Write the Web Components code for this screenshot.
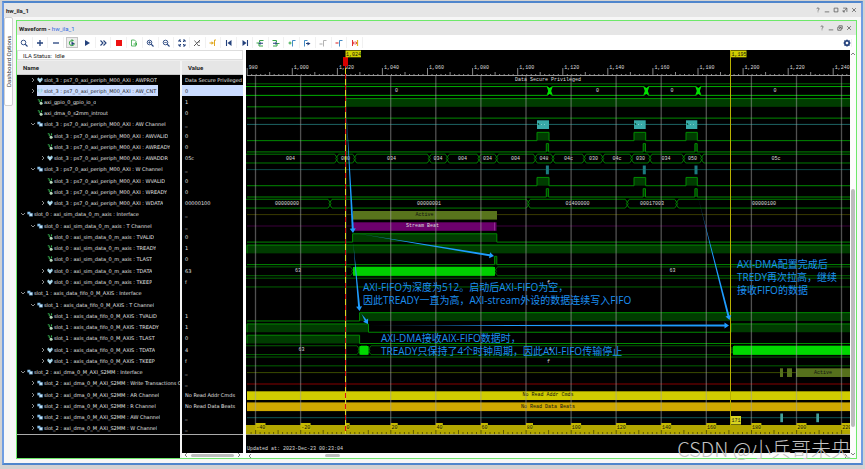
<!DOCTYPE html>
<html lang="en">
<head>
<meta charset="utf-8">
<title>hw_ila_1</title>
<style>
html,body{height:100%;margin:0}
body{background:#d2d2d2;font-family:Roboto,"Liberation Sans",sans-serif;font-size:6px;color:#222;overflow:hidden}
</style>
</head>
<body>
<ila-dashboard></ila-dashboard>
<script>
const define=(name,html,setup)=>customElements.define(name,class extends HTMLElement{
  constructor(){super();const t=document.createElement('template');t.innerHTML=html;
    this.attachShadow({mode:'open'}).append(t.content.cloneNode(true));}
  connectedCallback(){if(setup&&!this.ready){this.ready=true;setup(this,this.shadowRoot);}}
});

/* ---------- window buttons ---------- */
const winIcons={
  help:['Help','<path d="M5 5.5C5 1.5 11 1.5 11 5.2C11 7.5 8 7.5 8 10M8 12v2"/>'],
  min:['Minimize','<path d="M2 13h12"/>'],
  max:['Maximize','<path d="M3 3h10v10H3z"/>'],
  float:['Float','<path d="M3 3h10v10M13 3L4 13M3 8v5h5"/>'],
  restore:['Restore','<path d="M5 5V2h9v8h-3M2 6h9v8H2zM5 11l6-6"/>'],
  close:['Close','<path d="M3 3l10 10M13 3L3 13"/>']};
define('window-buttons',`<style>
:host{display:flex;gap:3px}
button{all:unset;width:6px;height:6px;display:block}
svg{display:block;width:6px;height:6px;fill:none;stroke:#555;stroke-width:2}
</style>`,(el,root)=>{
  for(const k of el.getAttribute('items').split(' ')){
    const b=document.createElement('button');b.setAttribute('aria-label',winIcons[k][0]);
    b.innerHTML=`<svg viewBox="0 0 16 16">${winIcons[k][1]}</svg>`;root.append(b);}
});

define('title-bar',`<style>
:host{display:flex;align-items:center;justify-content:space-between;background:#e6e6e6;height:14px;padding:0 4px 0 2px;box-sizing:border-box;font-weight:700;color:#222}
</style><span><slot></slot></span><slot name="tools"></slot>`);

/* ---------- toolbar ---------- */
const N='#24427c',G='#35a845',B='#2f7fc0';
const mag=s=>`<circle cx="7" cy="7" r="4.6" fill="none" stroke="${N}" stroke-width="1.8"/><path d="M10.5 10.5L15 15" stroke="${N}" stroke-width="2.2"/>${s}`;
const edge=(c,d)=>`<path d="M9 15V3h6" fill="none" stroke="${c}" stroke-width="1.8"/>${d}`;
const tools=[
 ['Search',mag('')],
 ['Add','<path d="M8 2v12M2 8h12" stroke="'+N+'" stroke-width="2.6"/>'],
 ['Remove','<path d="M2 8h12" stroke="'+N+'" stroke-width="2.6"/>'],
 ['Auto re-trigger',`<path d="M7 3A5.2 5.2 0 1 0 13 9" fill="none" stroke="${G}" stroke-width="2"/><path d="M7 0l5 3-5 3z" fill="${G}"/><path d="M7 5l6 4-6 4z" fill="${N}"/>`],
 ['Run trigger',`<path d="M4 2l10 6-10 6z" fill="${N}"/>`],
 ['Run immediate',`<path d="M3 3l5 5-5 5M9 3l5 5-5 5" fill="none" stroke="${N}" stroke-width="2.2"/>`],
 ['Stop','<path d="M2 2h12v12H2z" fill="#ee1111"/>'],
 ['Export data',`<path d="M3 2h6l3 3v9H3z" fill="none" stroke="${G}" stroke-width="1.6"/><path d="M7 10h7M11 7l3 3-3 3" fill="none" stroke="${G}" stroke-width="1.8"/>`],
 ['Zoom in',mag(`<path d="M7 4.5v5M4.5 7h5" stroke="${N}" stroke-width="1.5"/>`)],
 ['Zoom out',mag(`<path d="M4.5 7h5" stroke="${N}" stroke-width="1.5"/>`)],
 ['Zoom fit',`<path d="M2 6V2h4M10 2h4v4M14 10v4h-4M6 14H2v-4M2 2l4 4M14 2l-4 4M14 14l-4-4M2 14l4-4" fill="none" stroke="${N}" stroke-width="2"/>`],
 ['Snap off',`<path d="M2 14L14 2" stroke="#444" stroke-width="1.8"/><path d="M3 3l4 5M8 9l2 4h4M10 6h4" fill="none" stroke="#555" stroke-width="1.6"/>`],
 ['Go to cursor',`<path d="M14 2h-3v12" fill="none" stroke="#e0a820" stroke-width="2"/><path d="M1 8h5" stroke="#e0a820" stroke-width="2"/><path d="M5 4.500l5 3.500-5 3.500z" fill="#e0a820"/>`],
 ['First',`<path d="M3 2v12" stroke="${N}" stroke-width="2.2"/><path d="M13 2v12L5 8z" fill="${N}"/>`],
 ['Last',`<path d="M13 2v12" stroke="${N}" stroke-width="2.2"/><path d="M3 2v12l8-6z" fill="${N}"/>`],
 ['Previous transition',`<path d="M15 3H7v3M1 8h5v6h8" fill="none" stroke="${G}" stroke-width="2"/><path d="M14 8.500H8" stroke="${N}" stroke-width="2"/><path d="M9 5v7L5 8.500z" fill="${N}"/>`],
 ['Next transition',`<path d="M1 3h8v3M2 14h8V9h5" fill="none" stroke="${G}" stroke-width="2"/><path d="M2 8.500h6" stroke="${N}" stroke-width="2"/><path d="M7 5v7l4-3.500z" fill="${N}"/>`],
 ['Add marker',edge(B,`<path d="M4 5v6M1 8h6" stroke="${G}" stroke-width="2"/>`)],
 ['Next marker',`<path d="M3 15V3h6" fill="none" stroke="${B}" stroke-width="1.8"/><path d="M6 9h4" stroke="${N}" stroke-width="2"/><path d="M9 6l6 3-6 4z" fill="${N}"/>`],
 ['Previous marker',edge('#aaa','<path d="M1 10h6" stroke="#aaa" stroke-width="2"/>')],
 ['Remove marker',edge(B,'<path d="M1 8h6" stroke="#e03030" stroke-width="2.200"/>')],
 ['Swap cursors','<path d="M3 2v12" stroke="#e03030" stroke-width="2"/><path d="M13 2v12" stroke="#e0b020" stroke-width="2.500"/><path d="M3 8h9M6 5L4 8l2 3M9 5l3 3-3 3" stroke="#e03030" stroke-width="1.500" fill="none"/>']];
define('wave-toolbar',`<style>
:host{display:flex;justify-content:space-between;align-items:center;height:15px;background:#fff;padding-right:4px}
.set{display:grid;grid-template-columns:repeat(22,1fr);width:346px;height:11px}
button{all:unset;box-sizing:border-box;display:flex;align-items:center;justify-content:center;border-right:1px solid #f1f1f1}
button[aria-pressed]{border:1px solid #c4c4c4;background:#ececec;margin:0 2px}
svg{width:8px;height:8px;display:block}
</style><div class="set" role="toolbar"></div>
<button class="cfg" aria-label="Settings"><svg viewBox="0 0 16 16"><circle cx="8" cy="8" r="4.500" fill="none" stroke="#24427c" stroke-width="3.500"/><path d="M8 1v14M1 8h14M3 3l10 10M13 3L3 13" stroke="#24427c" stroke-width="2"/><circle cx="8" cy="8" r="2.500" fill="#fff"/></svg></button>`,(el,root)=>{
  root.querySelector('.set').innerHTML=tools.map(([n,s],i)=>`<button aria-label="${n}"${i===3?' aria-pressed="true"':''}><svg viewBox="0 0 16 16">${s}</svg></button>`).join('');
});

/* ---------- scroll bar ---------- */
define('scroll-strip',`<style>
:host{display:flex;background:#fcfcfc;align-items:center;justify-content:space-between;box-sizing:border-box;padding:0 2px;gap:3px;height:5px}
:host([vertical]){flex-direction:column;height:auto;padding:2px 0}
svg{width:4px;height:4px;fill:none;stroke:#555;stroke-width:1.5;flex:none}
.track{flex:1;display:flex;align-self:stretch;align-items:center}
:host([vertical]) .track{flex-direction:column;align-self:center}
.lead{flex:var(--lead,0)}.thumb{flex:var(--size,1);background:#bdbdbd;border-radius:2px;height:3px}.tail{flex:var(--tail,0)}
:host([vertical]) .thumb{width:4px;height:auto}
:host([vertical]) svg{transform:rotate(90deg)}
</style><svg viewBox="0 0 8 8"><path d="M6 0L2 4l4 4"/></svg><div class="track"><i class="lead"></i><i class="thumb"></i><i class="tail"></i></div><svg viewBox="0 0 8 8"><path d="M2 0l4 4-4 4"/></svg>`);

/* ---------- signal names and values ---------- */
const s3='slot_3 : ps7_0_axi_periph_M00_AXI : ',s0='slot_0 : axi_sim_data_0_m_axis : ',s1='slot_1 : axis_data_fifo_0_M_AXIS : ',s2='slot_2 : axi_dma_0_M_AXI_S2MM : ';
/* [level, kind, expander, name, value] */
const rows=[
[1,'bus','>',s3+'AWPROT','Data Secure Privileged'],[1,'bus','>',s3+'AW_CNT','0'],
[1,'bit','','axi_gpio_0_gpio_io_o','1'],[1,'bit','','axi_dma_0_s2mm_introut','0'],
[1,'if','v',s3+'AW Channel','_'],[2,'bit','',s3+'AWVALID','0'],[2,'bit','',s3+'AWREADY','0'],[2,'bus','>',s3+'AWADDR','05c'],
[1,'if','v',s3+'W Channel','_'],[2,'bit','',s3+'WVALID','0'],[2,'bit','',s3+'WREADY','0'],[2,'bus','>',s3+'WDATA','00000100'],
[0,'if','v',s0+'Interface','_'],[1,'if','v',s0+'T Channel','_'],[2,'bit','',s0+'TVALID','0'],[2,'bit','',s0+'TREADY','1'],[2,'bit','',s0+'TLAST','0'],[2,'bus','>',s0+'TDATA','63'],[2,'bus','>',s0+'TKEEP','f'],
[0,'if','v',s1+'Interface',''],[1,'if','v',s1+'T Channel',''],[2,'bit','',s1+'TVALID','1'],[2,'bit','',s1+'TREADY','1'],[2,'bit','',s1+'TLAST','0'],[2,'bus','>',s1+'TDATA','4'],[2,'bus','>',s1+'TKEEP','f'],
[0,'if','v',s2+'Interface','_'],[1,'if','>',s2+'Write Transactions Channel','_'],[1,'if','>',s2+'AR Channel','No Read Addr Cmds'],[1,'if','>',s2+'R Channel','No Read Data Beats'],[1,'if','>',s2+'AW Channel','_'],[1,'if','>',s2+'W Channel','_']];
const kinds={
 bus:'<path d="M1 4l3-3 4 4 4-4 3 3v4l-7 7-7-7z" fill="#9fd0e4"/><path d="M8 5v9" stroke="#e8f6ff" stroke-width="2"/>',
 bit:'<path d="M2 2h4v6h4v6" fill="none" stroke="#35b050" stroke-width="2.500"/><circle cx="11" cy="11" r="4" fill="#bcd8bc"/><path d="M12 1v5" stroke="#35b050" stroke-width="3"/>',
 if:'<path d="M1 2h8v7H1z" fill="#8cc4ee"/><path d="M6 6h9v8H6z" fill="#c8e6fa" stroke="#3a80b8" stroke-width="1"/>'};
define('signal-table',`<style>
:host{display:grid;min-height:0}
table{display:grid;grid-template-columns:163px 61px;grid-template-rows:14px 10px repeat(31,1fr) 24px;column-gap:2px;background:#f4f4f4;min-height:0}
thead,tbody,tr{display:contents}
th{background:#e6e6e6;text-align:left;color:#222;padding:0 6px;display:flex;align-items:center;border-bottom:1px solid #c8c8c8;box-sizing:border-box}
td{background:#000;color:#e2e2e2;font:5px/8px "DejaVu Sans",sans-serif;padding:0;display:flex;align-items:center;white-space:nowrap;overflow:hidden;min-width:0;min-height:0}
td.n{padding-left:calc(2px + 10px*var(--l));gap:1px}
td.v{padding-left:3px}
button{all:unset;width:7px;height:8px;flex:none;display:flex;align-items:center;justify-content:center}
button svg{width:4px;height:4px;fill:none;stroke:#bbb;stroke-width:1.5}
.lab{display:flex;align-items:center;gap:1px;height:100%;min-width:0;overflow:hidden}
.lab svg{width:6px;height:6px;flex:none}
.sel .lab,.sel .v{background:#cbdcff;color:#222}
.sel .lab{padding-right:2px}
.end{border-top:1px solid #aaa;box-sizing:border-box;align-items:flex-end}
scroll-strip{flex:1}
</style><table><thead><tr><th scope="col">Name</th><th scope="col">Value</th></tr></thead><tbody></tbody></table>`,(el,root)=>{
  root.querySelector('tbody').innerHTML=rows.map(([l,k,x,n,v],i)=>`<tr${i===1?' class="sel"':''}><td class="n" style="--l:${l}">${x?`<button aria-label="${x==='v'?'Collapse':'Expand'}" aria-expanded="${x==='v'}"><svg viewBox="0 0 8 8"><path d="${x==='v'?'M0 2l4 4 4-4':'M2 0l4 4-4 4'}"/></svg></button>`:'<button tabindex="-1" aria-hidden="true"></button>'}<span class="lab"><svg viewBox="0 0 16 16">${kinds[k]}</svg>${n}</span></td><td class="v">${v}</td></tr>`).join('')
  +'<tr><td class="end"></td><td class="end"><scroll-strip></scroll-strip></td></tr>';
});

/* ---------- waveform drawing ---------- */
define('wave-canvas',`<style>
:host{display:block;background:#000;min-height:0;overflow:hidden}
svg{display:block;width:100%;height:100%}
text{font:5px "Liberation Mono",monospace;fill:#ddd}
text.m{text-anchor:middle}
text.k{fill:#111}
text.note{font:10px "Open Sans","Noto Sans CJK SC",sans-serif;fill:#1c8ff0}
</style><svg viewBox="246 50 604 403" preserveAspectRatio="xMinYMin meet"></svg>`,(el,root)=>{
  const L=247,R=850,c=i=>79.3+11.27*i;let o='';
  const rect=(x,y,w,h,f,s)=>o+=`<rect x="${x}" y="${y}" width="${w}" height="${h}" fill="${f}"${s?` stroke="${s}"`:''}/>`;
  const line=(x1,y1,x2,y2,s,w=1,e='')=>o+=`<path d="M${x1} ${y1}L${x2} ${y2}" stroke="${s}" stroke-width="${w}" fill="none" ${e}/>`;
  const text=(x,y,t,k='')=>o+=`<text x="${x}" y="${y}" class="${k}">${t}</text>`;
  const bit=(i,hi,on='#008a00')=>{const t=c(i)-3.3,b=c(i)+5;let x=L,d=`M${L} ${b}`;
    for(const [a,z] of hi){rect(a,t,z-a,b-t,'#003c00');d+=`H${a}V${t}H${z}${z<R?'V'+b:''}`;x=z;}
    if(x<R)d+=`H${R}`;o+=`<path d="${d}" fill="none" stroke="${on}"/>`;};
  const bus=(i,cuts,labels,col='#007a00')=>{const t=c(i)-4,b=c(i)+4.8,m=(t+b)/2;const p=[L-3,...cuts,R+3];
    for(let k=0;k<p.length-1;k++){const a=p[k],z=p[k+1];
      o+=`<path d="M${a-1} ${m}L${a+2} ${t}H${z-2}L${z+1} ${m}L${z-2} ${b}H${a+2}Z" fill="none" stroke="${col}"/>`;}
    labels.forEach(([x,s])=>text(x,c(i)+1.5,s,'m'));};
  /* upper time scale */
  line(L,75.5,R,75.5,'#999');
  for(let k=0;k<134;k++){const x=247.2+4.508*k;line(x.toFixed(1),k%10===0?68:k%5===0?72:74,x.toFixed(1),75.5,'#aaa',.8);
    if(k%10===0)text((x+1.5).toFixed(1),69,(980+2*k).toLocaleString('en-US'));}
  text(548,80.5,'Data Secure Privileged','m');
  line(L,83.8,R,83.8,'#004a00',1.6);
  bus(1,[549.7,646.3,698.3],[[396.500,'0'],[597.5,'0'],[672,'0'],[775,'0']],'#00b000');
  for(const x of [549.7,646.3,698.3])o+=`<path d="M${x-3} 86.500L${x} 88L${x+3} 86.500L${x+1.500} 91L${x+3} 95L${x} 94L${x-3} 95L${x-1.500} 91Z" fill="#00e000"/>`;
  bit(2,[[345.5,R]],'#008c00');
  bit(3,[]);
  line(L,124.4,R,124.4,'#1c6464');line(L,169.6,R,169.6,'#0c4848');
  const wide=[[537,549],[634,645.7],[686,697.3]],thin=[[546.3,548.6],[643.2,645.5],[694.9,697.2]];
  bit(5,wide);bit(6,thin);bit(9,wide);bit(10,thin);
  for(const [a,z] of wide){rect(a,120.3,z-a,8.700,'#38aaa8');line(a+1,123,a+2,125,'#042');line(a+4,124.500,z-2,124.500,'#8fd8d4',.8,'stroke-dasharray="1 2"');}
  for(const [a,z] of thin)rect(a-.4,165.500,3,8.800,'#1c7c80');
  bus(7,[336.7,354.7,429.3,447.3,479,496.7,535.3,553,584.3,602.7,631.7,650,683.7,701.7],
   [[290.500,'004'],[345.500,'000'],[391.500,'034'],[438,'034'],[462.500,'004'],[487.500,'034'],[515.500,'004'],[544,'048'],[568.500,'04c'],[593.500,'030'],[617,'04c'],[640.500,'030'],[666,'034'],[692.500,'050'],[776,'05c']]);
  bus(11,[330,528.3,627.3,676.7],[[287,'00000000'],[429,'00000001'],[577.500,'01400000'],[652,'00017003'],[764,'00000100']]);
  line(L,214.600,R,214.600,'#3a3a00');rect(353,211,144,8.600,'#58741c');text(424.500,216,'Active','m k');
  line(L,226,R,226,'#3c003c');rect(353,222.300,143.500,8.500,'#6c006c');line(494.500,222.500,494.500,230.500,'#a040a0',.7);text(422.500,227,'Stream Beat','m');
  bit(14,[[352.6,496.8]]);bit(15,[[L,R]]);bit(16,[[494.6,496.8]]);
  bus(17,[352.6,495.5],[[298,'63'],[672.500,'63']],'#006000');rect(353,267,142,8.800,'#00d000');
  bus(18,[],[[548.500,'f']],'#006000');
  bit(21,[[359.6,R]]);bit(22,[[L,368.5],[731,R]]);bit(23,[[L,359.6]]);
  bus(24,[359,369,732],[[301.500,'63'],[550,'4']],'#006000');rect(359.500,346,9,8.800,'#00d800');rect(733,346,R-733,8.800,'#00d800');
  bus(25,[],[[548.500,'f']],'#006000');
  line(L,372.600,R,372.600,'#3a4a00');
  for(const [x,w] of [[780,3],[787,5],[796,54]])rect(x,368.300,w,8.700,'#56701c');
  text(823,374,'Active','m k');
  line(L,384,R,384,'#5a0000',1.600);
  rect(L,391.300,R-L,8.700,'#d0cc00');text(548,396.400,'No Read Addr Cmds','m k');
  rect(L,402.400,R-L,8.700,'#cfa800');text(548,407.600,'No Read Data Beats','m k');
  line(L,417.700,R,417.700,'#0e5555');rect(780.300,413.500,2.700,8.700,'#44a09c');rect(816.300,413.500,2.700,8.700,'#44a09c');
  /* lower time scale */
  rect(246,425,604,9.600,'#b4a800');
  for(let k=0;k<132;k++){const x=(255.6+4.508*(k-1)).toFixed(1);line(x,k%5===1?430:432,x,434.600,'#4c4800',.8);}
  for(let k=0;k<14;k++)line((255.5+45.08*k).toFixed(1),76,(255.5+45.08*k).toFixed(1),425,'#a0a0a0',1.300,'opacity=".5"');
  for(let k=0;k<14;k++){const x=255.5+45.08*k,s=String(20*k-40);rect(x.toFixed(1),423,s.length*3+1,7,'#c4b800');text((x+.7).toFixed(1),428.500,s,'k');}
  line(246,434.500,R,434.500,'#bbb',.6);
  /* cursors */
  line(345.500,57,345.500,434,'#e01010');line(345.500,57,345.500,434,'#e0d820',1,'stroke-dasharray="6 5"');
  rect(343,57,5,9,'#d80000');rect(345.500,50.500,15.500,6.800,'#d0d000');text(346,55.500,'1,024','k');
  line(730.500,50,730.500,425,'#b8b000');rect(731,50.500,15.500,6.800,'#d0d000');text(731.500,55.500,'1,195','k');
  rect(731,416,10,8.500,'#d8d420');text(731.500,421.500,'171','k');
  /* annotations */
  o+='<defs>';let g='';
  [[346,105,353,233],[354,233,494,256],[353,240,359.500,311],[361,313,368,324],[368,325.500,729,325.500],[698,197,729.500,320]].forEach(([x,y,X,Y],i)=>{
    const l=Math.hypot(X-x,Y-y),u=(X-x)/l,v=(Y-y)/l,bx=X-u*4.500,by=Y-v*4.500;
    o+=`<linearGradient id="a${i}" gradientUnits="userSpaceOnUse" x1="${x}" y1="${y}" x2="${X}" y2="${Y}"><stop stop-color="#1e9cff" stop-opacity=".3"/><stop offset=".4" stop-color="#1e9cff"/></linearGradient>`;
    g+=`<path d="M${x} ${y}L${bx-v} ${by+u}L${bx-v*3} ${by+u*3}L${X} ${Y}L${bx+v*3} ${by-u*3}L${bx+v} ${by-u}Z" fill="url(#a${i})"/>`;});
  o+='</defs>'+g;
  text(363,291,'AXI-FIFO为深度为512。启动后AXI-FIFO为空，','note');
  text(363,304,'因此TREADY一直为高，AXI-stream外设的数据连续写入FIFO','note');
  text(381,342,'AXI-DMA接收AIX-FIFO数据时，','note');
  text(381,355,'TREADY只保持了4个时钟周期，因此AXI-FIFO传输停止','note');
  text(737,268,'AXI-DMA配置完成后','note');
  text(737,281,'TREDY再次拉高，继续','note');
  text(737,294,'接收FIFO的数据','note');
  text(247,450,'Updated at: 2023-Dec-23 00:23:04');
  root.querySelector('svg').innerHTML=o;
});

/* ---------- panel ---------- */
define('waveform-panel',`<style>
:host{display:grid;grid-template-rows:14px 15px 1fr;border:1px solid #6ee86a;min-height:0;background:#fff;position:relative}
a{color:#2c66e0;font-weight:400;text-decoration:none}
.body{display:grid;grid-template-columns:226px 1fr 6px;min-height:0}
.left{display:grid;grid-template-rows:10px 1fr;row-gap:1px;min-height:0;background:#eee}
.status{background:#fff;border:1px solid #ddd;box-sizing:border-box;padding:0 5px;display:flex;align-items:center}
.right{display:grid;grid-template-rows:1fr 5px;min-height:0;margin-left:3px}
.right scroll-strip{--lead:70;--size:16;--tail:504}
.v{--lead:128;--size:234;--tail:22}
.mark{position:absolute;right:5px;bottom:-3px;font:300 20px/24px "Noto Sans CJK SC",sans-serif;color:#c4c4c4;white-space:nowrap}
</style>
<title-bar><span>Waveform - <a href="#hw_ila_1">hw_ila_1</a></span><window-buttons slot="tools" items="help min restore close"></window-buttons></title-bar>
<wave-toolbar></wave-toolbar>
<div class="body"><div class="left"><div class="status">ILA Status:&nbsp; Idle</div><signal-table></signal-table></div>
<div class="right"><wave-canvas></wave-canvas><scroll-strip></scroll-strip></div>
<scroll-strip class="v" vertical></scroll-strip></div>
<div class="mark">CSDN @小兵哥未央</div>`);

define('side-tab',`<style>
:host{display:block}
button{all:unset;box-sizing:border-box;writing-mode:vertical-rl;transform:rotate(180deg);width:9px;height:89px;background:#fff;border:1px solid #d0d0d0;border-radius:2px;text-align:center;line-height:7px;color:#333}
</style><button><slot></slot></button>`);

define('ila-dashboard',`<style>
:host{display:grid;height:100vh;box-sizing:border-box;padding:1px 2px 4px}
.win{display:grid;grid-template-rows:14px 1fr;border:2px solid #6f9de2;border-top-color:#4f86cc;border-bottom-color:#4f86cc;background:#f7f7f7;min-height:0}
.main{display:grid;grid-template-columns:9px 1fr;column-gap:3px;padding-right:4px;min-height:0}
waveform-panel{margin:3px 0 4px}
</style><div class="win"><title-bar>hw_ila_1<window-buttons slot="tools" items="help min max float close"></window-buttons></title-bar>
<div class="main"><side-tab>Dashboard Options</side-tab><waveform-panel></waveform-panel></div></div>`);
</script>
</body>
</html>
